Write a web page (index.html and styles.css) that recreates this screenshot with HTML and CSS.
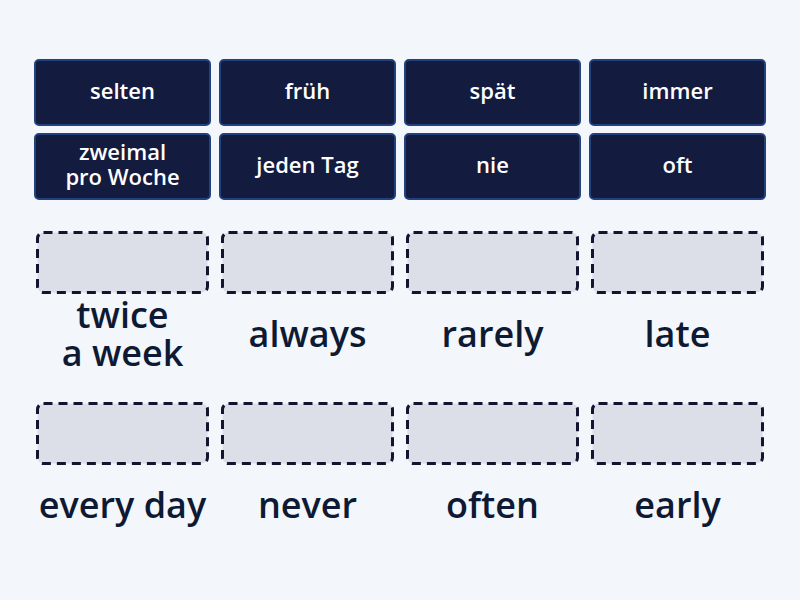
FILE: index.html
```html
<!DOCTYPE html>
<html lang="en">
<head>
<meta charset="utf-8">
<title>Match up</title>
<link rel="stylesheet" href="styles.css">
</head>
<body>
<div id="game">

<div class="tiles">
 <div class="tile">selten</div>
 <div class="tile">früh</div>
 <div class="tile">spät</div>
 <div class="tile">immer</div>
 <div class="tile">zweimal<br>pro Woche</div>
 <div class="tile">jeden Tag</div>
 <div class="tile">nie</div>
 <div class="tile">oft</div>
</div>

<div class="targets">
 <div class="target"><svg class="zone" viewBox="0 0 173 63"><rect x="1.5" y="1.5" width="170" height="60" rx="6"/></svg><div class="label">twice<br>a week</div></div>
 <div class="target"><svg class="zone" viewBox="0 0 173 63"><rect x="1.5" y="1.5" width="170" height="60" rx="6"/></svg><div class="label">always</div></div>
 <div class="target"><svg class="zone" viewBox="0 0 173 63"><rect x="1.5" y="1.5" width="170" height="60" rx="6"/></svg><div class="label">rarely</div></div>
 <div class="target"><svg class="zone" viewBox="0 0 173 63"><rect x="1.5" y="1.5" width="170" height="60" rx="6"/></svg><div class="label">late</div></div>
 <div class="target"><svg class="zone" viewBox="0 0 173 63"><rect x="1.5" y="1.5" width="170" height="60" rx="6"/></svg><div class="label">every day</div></div>
 <div class="target"><svg class="zone" viewBox="0 0 173 63"><rect x="1.5" y="1.5" width="170" height="60" rx="6"/></svg><div class="label">never</div></div>
 <div class="target"><svg class="zone" viewBox="0 0 173 63"><rect x="1.5" y="1.5" width="170" height="60" rx="6"/></svg><div class="label">often</div></div>
 <div class="target"><svg class="zone" viewBox="0 0 173 63"><rect x="1.5" y="1.5" width="170" height="60" rx="6"/></svg><div class="label">early</div></div>
</div>

</div>
</body>
</html>
```

FILE: styles.css
```css
body{margin:0px;padding:0px;background-color:#f3f6fb;font-family:"Open Sans",sans-serif;}
#game{width:732px;margin:0px auto;padding-top:59px;}
.tiles{display:grid;grid-template-columns:repeat(4,177px);column-gap:8px;row-gap:7px;}
.tile{height:67px;box-sizing:border-box;padding-bottom:5px;display:flex;align-items:center;justify-content:center;text-align:center;background-color:#131b3f;border:2px solid #22417f;border-radius:5px;color:#ffffff;font-size:22px;font-weight:600;line-height:25px;}
.targets{display:grid;grid-template-columns:repeat(4,177px);column-gap:8px;row-gap:28px;margin-top:31px;}
.zone{display:block;width:173px;height:63px;margin:0px 2px;}
.zone rect{fill:#dcdfe7;stroke:#111530;stroke-width:3;stroke-dasharray:9 6;}
.label{height:80px;display:flex;align-items:center;justify-content:center;text-align:center;color:#0e1a33;font-size:36px;font-weight:600;line-height:38px;}
```
